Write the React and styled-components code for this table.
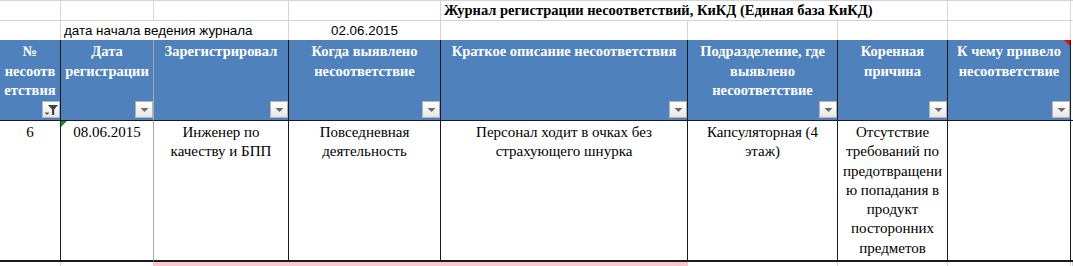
import React from 'react'
import styled, { createGlobalStyle } from 'styled-components'

const GlobalStyle = createGlobalStyle`
  html, body {
    margin: 0;
    padding: 0;
    background: #ffffff;
    overflow: hidden;
  }
`

const GRID = '#d4d4d4'
const DARK = '#1a1a1a'
const SERIF = '"Liberation Serif", "Times New Roman", serif'

const Sheet = styled.div`
  display: grid;
  grid-template-columns: 61px 93px 135px 152px 247px 150px 110px 123px 1fr;
  grid-template-rows: 20px 19px 81px 141px 10px;
  width: 1073px;
  height: 266px;
  border-top: 1px solid ${GRID};
  box-sizing: border-box;
  overflow: hidden;
`

const Cell = styled.div`
  box-sizing: border-box;
  grid-column: span ${p => p.$span || 1};
  border-right: 1px solid ${p => (p.$noRight ? 'transparent' : GRID)};
  border-bottom: 1px solid ${p => (p.$noBottom ? 'transparent' : GRID)};
  white-space: nowrap;
`

const TitleCell = styled(Cell)`
  font-family: ${SERIF};
  font-weight: 700;
  font-size: 14.5px;
  line-height: 19px;
  color: #000;
  padding-left: 3px;
`

const NoteCell = styled(Cell)`
  font-family: "Liberation Sans", Arial, sans-serif;
  font-size: 13.4px;
  line-height: 19px;
  color: #000;
  padding-left: ${p => (p.$align === 'center' ? '0' : '3px')};
  text-align: ${p => p.$align || 'left'};
  border-bottom-color: transparent;
`

const HeadCell = styled.div`
  position: relative;
  box-sizing: border-box;
  background: #4f81bd;
  border-right: 1px solid ${p => (p.$soft ? '#a9a9a9' : DARK)};
  border-bottom: 1px solid ${DARK};
  padding-top: 2px;
  text-align: center;
  font-family: ${SERIF};
  font-weight: 700;
  font-size: 14.5px;
  line-height: 19.5px;
  color: #ffffff;
  white-space: nowrap;
`

const DataCell = styled.div`
  position: relative;
  box-sizing: border-box;
  background: #ffffff;
  border-right: 1px solid ${p => (p.$soft ? '#a9a9a9' : DARK)};
  border-bottom: 2px solid ${DARK};
  padding-top: 2px;
  text-align: center;
  font-family: ${SERIF};
  font-size: 15px;
  line-height: 19.3px;
  color: #000;
  white-space: nowrap;
`

const EdgeCell = styled.div`
  box-sizing: border-box;
  border-bottom: ${p => p.$line || 'none'};
`

const Line = styled.span`
  display: block;
`

const BelowCell = styled.div`
  box-sizing: border-box;
  grid-column: span ${p => p.$span || 1};
  background: ${p => (p.$pink ? '#ffc7ce' : '#ffffff')};
  border-right: 1px solid ${GRID};
`

const FilterButton = styled.div`
  position: absolute;
  right: 0;
  bottom: 2px;
  width: 18px;
  height: 17px;
  box-sizing: border-box;
  border: 1px solid #b4b4b4;
  background: linear-gradient(#ffffff, #e6e6e6);
  display: flex;
  align-items: center;
  justify-content: center;
`

const Marker = styled.span`
  position: absolute;
  top: 0;
  ${p => (p.$side === 'right' ? 'right: 0;' : 'left: 0;')}
  width: 0;
  height: 0;
  border-style: solid;
  ${p =>
    p.$side === 'right'
      ? `border-width: 0 6px 6px 0; border-color: transparent ${p.$color} transparent transparent;`
      : `border-width: 6px 6px 0 0; border-color: ${p.$color} transparent transparent transparent;`}
`

const Arrow = () => (
  <svg width="9" height="6" viewBox="0 0 9 6">
    <path d="M0.5 1 L8.5 1 L4.5 5 Z" fill="#6b6b6b" />
  </svg>
)

const Funnel = () => (
  <svg width="16" height="14" viewBox="0 0 16 14">
    <path d="M5 2 L15 2 L11.2 6.5 L11.2 12 L9 12 L9 6.5 Z" fill="#444" />
    <path d="M1.5 9.5 L6.5 9.5 L4 12 Z" fill="#555" />
  </svg>
)

const headers = [
  { lines: ['№', 'несоотв', 'етствия'], filtered: true },
  { lines: ['Дата', 'регистрации'], soft: true },
  { lines: ['Зарегистрировал'] },
  { lines: ['Когда выявлено', 'несоответствие'] },
  { lines: ['Краткое описание несоответствия'] },
  { lines: ['Подразделение, где', 'выявлено', 'несоответствие'] },
  { lines: ['Коренная', 'причина'] },
  { lines: ['К чему привело', 'несоответствие'], comment: true },
]

const row = [
  { lines: ['6'] },
  { lines: ['08.06.2015'], soft: true, flag: true },
  { lines: ['Инженер по', 'качеству и БПП'] },
  { lines: ['Повседневная', 'деятельность'] },
  { lines: ['Персонал ходит в очках без', 'страхующего шнурка'] },
  { lines: ['Капсуляторная (4', 'этаж)'] },
  {
    lines: [
      'Отсутствие',
      'требований по',
      'предотвращени',
      'ю попадания в',
      'продукт',
      'посторонних',
      'предметов',
    ],
  },
  { lines: [] },
]

export default function App() {
  return (
    <>
      <GlobalStyle />
      <Sheet>
        {/* row 1 – title */}
        <Cell />
        <Cell />
        <Cell />
        <Cell />
        <TitleCell $span={3}>
          Журнал регистрации несоответствий, КиКД (Единая база КиКД)
        </TitleCell>
        <Cell />
        <Cell $noRight />

        {/* row 2 – start date */}
        <Cell $noBottom />
        <NoteCell $span={2}>дата начала ведения журнала</NoteCell>
        <NoteCell $align="center">02.06.2015</NoteCell>
        <Cell $noBottom />
        <Cell $noBottom />
        <Cell $noBottom />
        <Cell $noBottom />
        <Cell $noBottom $noRight />

        {/* header */}
        {headers.map((h, i) => (
          <HeadCell key={i} $soft={h.soft}>
            {h.lines.map((l, j) => (
              <Line key={j}>{l}</Line>
            ))}
            {h.comment && <Marker $side="right" $color="#ff0000" />}
            <FilterButton>{h.filtered ? <Funnel /> : <Arrow />}</FilterButton>
          </HeadCell>
        ))}
        <EdgeCell $line={`1px solid ${DARK}`} />

        {/* data */}
        {row.map((c, i) => (
          <DataCell key={i} $soft={c.soft}>
            {c.flag && <Marker $color="#1f8a1f" />}
            {c.lines.map((l, j) => (
              <Line key={j}>{l}</Line>
            ))}
          </DataCell>
        ))}
        <EdgeCell $line={`2px solid ${DARK}`} />

        {/* next row */}
        <BelowCell />
        <BelowCell />
        <BelowCell $pink $span={3} />
        <BelowCell />
        <BelowCell />
        <BelowCell />
        <BelowCell />
      </Sheet>
    </>
  )
}
